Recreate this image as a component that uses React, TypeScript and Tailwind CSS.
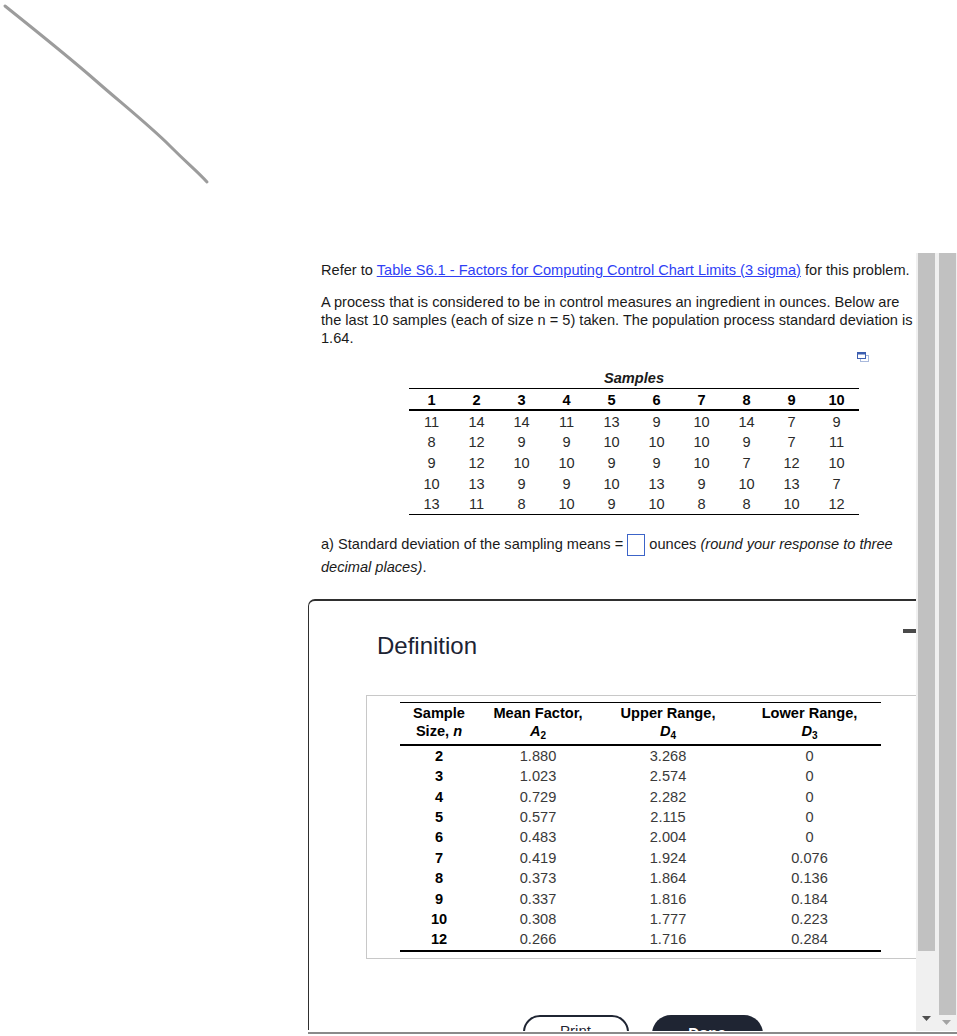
import React from 'react'

const samples = [
  [11, 14, 14, 11, 13, 9, 10, 14, 7, 9],
  [8, 12, 9, 9, 10, 10, 10, 9, 7, 11],
  [9, 12, 10, 10, 9, 9, 10, 7, 12, 10],
  [10, 13, 9, 9, 10, 13, 9, 10, 13, 7],
  [13, 11, 8, 10, 9, 10, 8, 8, 10, 12],
]

const factors: [string, string, string, string][] = [
  ['2', '1.880', '3.268', '0'],
  ['3', '1.023', '2.574', '0'],
  ['4', '0.729', '2.282', '0'],
  ['5', '0.577', '2.115', '0'],
  ['6', '0.483', '2.004', '0'],
  ['7', '0.419', '1.924', '0.076'],
  ['8', '0.373', '1.864', '0.136'],
  ['9', '0.337', '1.816', '0.184'],
  ['10', '0.308', '1.777', '0.223'],
  ['12', '0.266', '1.716', '0.284'],
]

function PopupIcon() {
  return (
    <svg width="13" height="11" viewBox="0 0 13 11">
      <rect x="3.5" y="3.5" width="8" height="6" fill="none" stroke="#a9b9dc" strokeWidth="1" />
      <rect x="0.5" y="0.5" width="8" height="6" fill="#fff" stroke="#3d5fb0" strokeWidth="1" />
      <rect x="0.5" y="0.5" width="8" height="2" fill="#3d5fb0" />
    </svg>
  )
}

function Arrow({ color }: { color: string }) {
  return (
    <svg width="9" height="5" viewBox="0 0 9 5" className="block">
      <polygon points="0,0 9,0 4.5,5" fill={color} />
    </svg>
  )
}

function SamplesTable() {
  return (
    <div className="ml-[88px] w-[450px] text-[14.6px]">
      <div className="text-center font-bold italic leading-[18px] pb-[1px] border-b border-black">Samples</div>
      <div className="grid grid-cols-10 h-[22px] pt-[1px] items-center border-b-2 border-black font-bold text-black">
        {Array.from({ length: 10 }, (_, i) => (
          <div key={i} className="text-center">{i + 1}</div>
        ))}
      </div>
      <div className="border-b border-black">
        {samples.map((row, r) => (
          <div key={r} className="grid grid-cols-10 h-[20.6px] pt-[1px] items-center text-[#2a2a2a]">
            {row.map((v, c) => (
              <div key={c} className="text-center">{v}</div>
            ))}
          </div>
        ))}
      </div>
    </div>
  )
}

function FactorsTable() {
  const cols = 'grid grid-cols-[78px_120px_140px_143px]'
  return (
    <div className="w-[481px] text-[14.6px]">
      <div className={`${cols} border-t border-b-2 border-black pt-[1px] pb-[4px] font-bold text-black leading-[18px]`}>
        <div className="text-center">Sample<br />Size, <i>n</i></div>
        <div className="text-center">Mean Factor,<br /><i>A</i><sub className="text-[10px]">2</sub></div>
        <div className="text-center">Upper Range,<br /><i>D</i><sub className="text-[10px]">4</sub></div>
        <div className="text-center">Lower Range,<br /><i>D</i><sub className="text-[10px]">3</sub></div>
      </div>
      <div className="border-b-2 border-black">
        {factors.map((f) => (
          <div key={f[0]} className={`${cols} h-[20.35px] items-center text-[#3a3a3a]`}>
            <div className="text-center font-bold text-black">{f[0]}</div>
            <div className="text-center">{f[1]}</div>
            <div className="text-center">{f[2]}</div>
            <div className="text-center">{f[3]}</div>
          </div>
        ))}
      </div>
    </div>
  )
}

function DefinitionModal() {
  return (
    <div className="ml-[308px] mt-[21px] w-[668px] h-[431px] border-t-2 border-l border-[#2f2f2f] rounded-tl-[7px] pt-[29px] bg-white">
      <div className="flex items-start pl-[68px] pr-[49px]">
        <h2 className="mt-[2px] text-[24px] leading-[28px] text-[#1c2333]">Definition</h2>
        <div className="flex-1" />
        <div className="-mt-[1px] w-[24px] h-[4px] bg-[#4a4a4a]" />
      </div>
      <div className="mx-[57px] mt-[35px] border border-[#c8c8c8] pt-[6px] pb-[6px] pl-[33px]">
        <FactorsTable />
      </div>
      <div className="flex justify-center gap-[23px] mt-[56px]">
        <button className="w-[106px] h-[34px] rounded-[17px] border-2 border-[#1f2533] bg-white text-[15px] text-[#1f2533]">
          Print
        </button>
        <button className="w-[111px] h-[38px] rounded-[19px] bg-[#1f2533] text-[15px] font-bold text-white">
          Done
        </button>
      </div>
    </div>
  )
}

export default function App() {
  return (
    <div className="w-[957px] h-[1036px] overflow-hidden bg-white font-['Liberation_Sans',Arial,sans-serif] text-[#1a1a1a]">
      <svg width="957" height="253" className="block">
        <path
          d="M5 6 C40 34, 70 58, 95 80 S150 126, 170 146 S196 170, 207 182"
          fill="none"
          stroke="#9c9c9c"
          strokeWidth="3"
          strokeLinecap="round"
        />
      </svg>

      <div className="flex h-[778px]">
        <div className="w-[916px] overflow-hidden">
          <div className="pl-[321px] pt-[8px] text-[14.6px] leading-[18px]">
            <p className="whitespace-nowrap">
              Refer to{' '}
              <a href="#" className="text-[#2f3ff5] underline">
                Table S6.1 - Factors for Computing Control Chart Limits (3 sigma)
              </a>{' '}
              for this problem.
            </p>
            <p className="mt-[14px] whitespace-nowrap">
              A process that is considered to be in control measures an ingredient in ounces. Below are
              <br />
              the last 10 samples (each of size n = 5) taken. The population process standard deviation is
              <br />
              1.64.
            </p>
            <div className="flex justify-end pr-[46px] mt-[5px] h-[10px]">
              <PopupIcon />
            </div>
            <div className="mt-[7px]">
              <SamplesTable />
            </div>
            <p className="mt-[18px] leading-[22px] whitespace-nowrap">
              a) Standard deviation of the sampling means ={' '}
              <span className="inline-block align-middle w-[18px] h-[22px] border border-[#3c64c8] bg-white" />{' '}
              ounces <i>(round your response to three</i>
              <br />
              <i>decimal places)</i>.
            </p>
          </div>
          <DefinitionModal />
        </div>

        <div className="w-[21px] bg-[#f0f0f0] flex flex-col">
          <div className="ml-[2px] w-[17px] h-[698px] bg-[#c1c1c1]" />
          <div className="flex-1" />
          <div className="flex justify-center pr-[1px] mb-[10px]">
            <Arrow color="#4f4f4f" />
          </div>
        </div>
        <div className="w-[2px] bg-[#f0f0f0]" />
        <div className="w-[18px] bg-[#f0f0f0] flex flex-col">
          <div className="w-[17px] h-[762px] bg-[#c1c1c1]" />
          <div className="flex-1" />
          <div className="flex justify-center pr-[3px] mb-[6px]">
            <Arrow color="#a3a3a3" />
          </div>
        </div>
      </div>

      <div className="h-[1px]" />
      <div className="ml-[308px] h-[2px] bg-[#8a8a8a]" />
    </div>
  )
}
